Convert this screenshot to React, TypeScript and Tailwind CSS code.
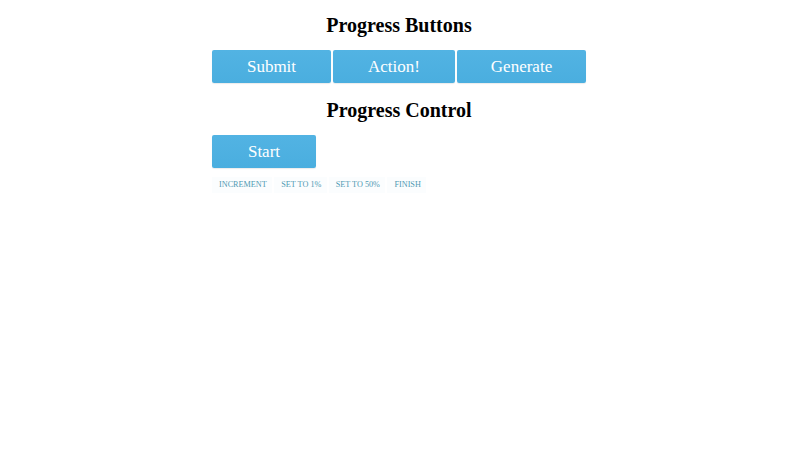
import React from "react";

const big = "h-[33px] bg-gradient-to-b from-[#52b3e3] to-[#4aaedf] text-white text-[17px] rounded-[2px] shadow-[0_1px_1px_rgba(0,0,0,0.08)]";

export default function App() {
  return (
    <div className="min-h-screen bg-white font-['Liberation_Serif',serif] text-black">
      <div className="w-[376px] mx-auto pr-[2px] flex flex-col">
        <h2 className="text-center text-[20px] font-bold leading-none mt-[15px]">Progress Buttons</h2>
        <div className="flex gap-[2px] mt-[15px]">
          <button className={`${big} w-[119px]`}>Submit</button>
          <button className={`${big} w-[122px]`}>Action!</button>
          <button className={`${big} w-[129px]`}>Generate</button>
        </div>
        <h2 className="text-center text-[20px] font-bold leading-none mt-[17px]">Progress Control</h2>
        <div className="mt-[15px]">
          <button className={`${big} w-[104px]`}>Start</button>
        </div>
        <div className="flex gap-[2px] mt-[9px]">
          {["Increment", "Set to 1%", "Set to 50%", "Finish"].map((t) => (
            <button key={t} className="pl-[7px] pr-[5.5px] py-[4px] bg-[#fbfdfe] text-[#4f9ab3] text-[8.2px] uppercase leading-none">
              {t}
            </button>
          ))}
        </div>
      </div>
    </div>
  );
}
